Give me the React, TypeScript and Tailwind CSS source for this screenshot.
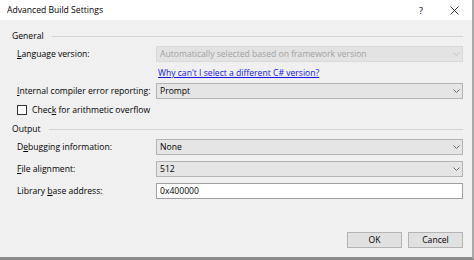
import React from "react";

const font = { fontFamily: '"Open Sans", "Noto Sans", sans-serif' };

function Chevron({ color = "#606060" }: { color?: string }) {
  return (
    <svg width="7" height="4" viewBox="0 0 7 4" className="shrink-0">
      <path d="M0.5 0.5 L3.5 3.5 L6.5 0.5" fill="none" stroke={color} strokeWidth="1" />
    </svg>
  );
}

function Select({ value, disabled }: { value: string; disabled?: boolean }) {
  return (
    <div
      className={
        disabled
          ? "flex h-[16px] w-[307px] items-center justify-between border border-[#d9d9d9] bg-[#e3e3e3] pl-[3px] pr-[2px] text-[#a2a2a2]"
          : "flex h-[16px] w-[307px] items-center justify-between border border-[#b4b4b4] bg-[#e5e5e5] pl-[3px] pr-[2px] text-black"
      }
    >
      <span className="leading-none">{value}</span>
      <Chevron color={disabled ? "#c0c0c0" : "#707070"} />
    </div>
  );
}

function Row({ label, children, mt }: { label: React.ReactNode; children: React.ReactNode; mt: string }) {
  return (
    <div className={`flex items-center pl-[17px] ${mt}`}>
      <div className="w-[139px] whitespace-nowrap leading-none">{label}</div>
      {children}
    </div>
  );
}

function Group({ title, mt }: { title: string; mt: string }) {
  return (
    <div className={`flex h-[14px] items-center pl-[12px] pr-[9px] ${mt}`}>
      <span className="leading-none">{title}</span>
      <div className="ml-[8px] h-px flex-1 bg-[#d5d5d5]" />
    </div>
  );
}

export default function App() {
  return (
    <div
      style={font}
      className="flex h-[260px] w-[474px] flex-col overflow-hidden border-b-[3px] border-r-2 border-b-[#8c8c8c] border-r-[#a8a8a8] bg-[#f0f0f0] text-[8.6px] text-black"
    >
      <div className="flex h-[20px] shrink-0 items-center bg-white pl-[7px]">
        <span className="flex-1 leading-none">Advanced Build Settings</span>
        <span className="mr-[27px] text-[9px] leading-none">?</span>
        <svg width="9" height="9" viewBox="0 0 9 9" className="mr-[13px]">
          <path d="M0.5 0.5 L8.5 8.5 M8.5 0.5 L0.5 8.5" stroke="#222" strokeWidth="0.9" />
        </svg>
      </div>
      <div className="flex flex-1 flex-col">
        <Group title="General" mt="mt-[9px]" />
        <Row
          mt="mt-[3px]"
          label={
            <>
              <span className="underline">L</span>anguage version:
            </>
          }
        >
          <Select value="Automatically selected based on framework version" disabled />
        </Row>
        <div className="mt-[4px] flex h-[14px] items-center pl-[158px]">
          <span className="leading-none text-[#1414e6] underline">Why can't I select a different C# version?</span>
        </div>
        <Row
          mt="mt-[3px]"
          label={
            <>
              <span className="underline">I</span>nternal compiler error reporting:
            </>
          }
        >
          <Select value="Prompt" />
        </Row>
        <div className="mt-[5px] flex h-[12px] items-center pl-[17px]">
          <div className="h-[10px] w-[10px] border border-[#333] bg-white" />
          <span className="ml-[5px] leading-none">
            Chec<span className="underline">k</span> for arithmetic overflow
          </span>
        </div>
        <Group title="Output" mt="mt-[6px]" />
        <Row
          mt="mt-[3px]"
          label={
            <>
              D<span className="underline">e</span>bugging information:
            </>
          }
        >
          <Select value="None" />
        </Row>
        <Row
          mt="mt-[6px]"
          label={
            <>
              <span className="underline">F</span>ile alignment:
            </>
          }
        >
          <Select value="512" />
        </Row>
        <Row
          mt="mt-[6px]"
          label={
            <>
              Library <span className="underline">b</span>ase address:
            </>
          }
        >
          <div className="flex h-[16px] w-[307px] items-center border border-[#a0a0a0] bg-white pl-[3px] leading-none">
            0x400000
          </div>
        </Row>
        <div className="mt-[33px] flex justify-end gap-[6px] pr-[9px]">
          <button className="h-[16px] w-[55px] border border-[#b4b4b4] bg-[#e1e1e1] leading-none">OK</button>
          <button className="h-[16px] w-[55px] border border-[#b4b4b4] bg-[#e1e1e1] leading-none">Cancel</button>
        </div>
      </div>
    </div>
  );
}
